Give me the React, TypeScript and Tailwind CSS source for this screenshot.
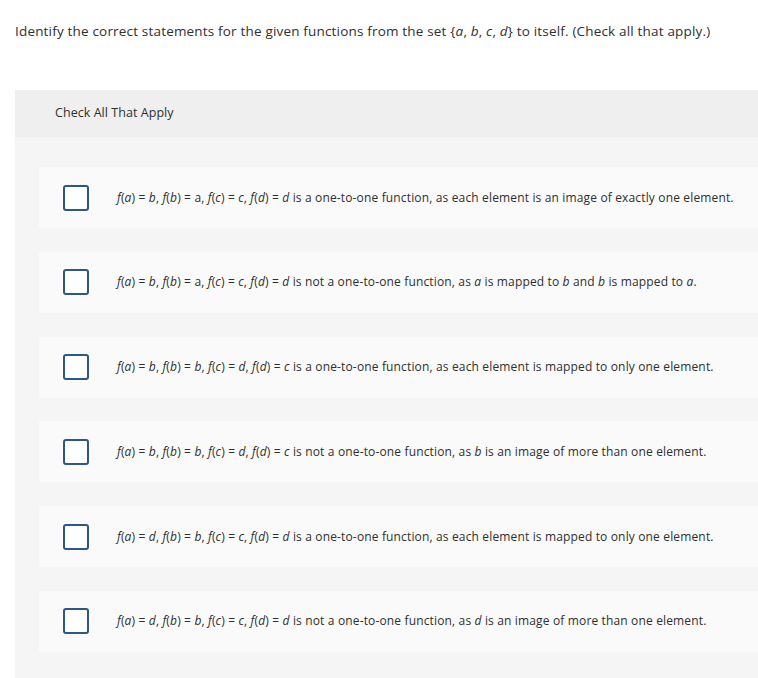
const options: { fx: [string, string, string, string]; aUpright?: boolean; tail: React.ReactNode }[] = [
  {
    fx: ['b', 'a', 'c', 'd'],
    aUpright: true,
    tail: <> is a one-to-one function, as each element is an image of exactly one element.</>,
  },
  {
    fx: ['b', 'a', 'c', 'd'],
    aUpright: true,
    tail: (
      <>
        {' '}is not a one-to-one function, as <i>a</i> is mapped to <i>b</i> and <i>b</i> is mapped to <i>a</i>.
      </>
    ),
  },
  {
    fx: ['b', 'b', 'd', 'c'],
    tail: <> is a one-to-one function, as each element is mapped to only one element.</>,
  },
  {
    fx: ['b', 'b', 'd', 'c'],
    tail: (
      <>
        {' '}is not a one-to-one function, as <i>b</i> is an image of more than one element.
      </>
    ),
  },
  {
    fx: ['d', 'b', 'c', 'd'],
    tail: <> is a one-to-one function, as each element is mapped to only one element.</>,
  },
  {
    fx: ['d', 'b', 'c', 'd'],
    tail: (
      <>
        {' '}is not a one-to-one function, as <i>d</i> is an image of more than one element.
      </>
    ),
  },
];

const args = ['a', 'b', 'c', 'd'];

function Statement({ fx, aUpright, tail }: (typeof options)[number]) {
  return (
    <span>
      {args.map((x, i) => (
        <span key={x}>
          <i>f</i>(<i>{x}</i>) = {aUpright && i === 1 ? fx[i] : <i>{fx[i]}</i>}
          {i < 3 ? ', ' : ''}
        </span>
      ))}
      {tail}
    </span>
  );
}

export default function App() {
  return (
    <div className="min-h-[678px] bg-white text-[#2f2f2f] font-['Open_Sans','Lato',sans-serif]">
      <p className="pl-[15px] pt-[22px] text-[13.5px] leading-[18px] tracking-[0.18px]">
        Identify the correct statements for the given functions from the set {'{'}
        <i>a</i>, <i>b</i>, <i>c</i>, <i>d</i>
        {'}'} to itself. (Check all that apply.)
      </p>

      <div className="ml-[15px] mt-[50px] bg-[#f5f5f5] pb-[26px]">
        <div className="flex h-[47px] items-center bg-[#efefef] pl-[40px] text-[12.5px] tracking-[0.05px]">
          Check All That Apply
        </div>
        <div className="flex flex-col gap-[23.8px] pl-[24px] pt-[30px]">
          {options.map((o, i) => (
            <div key={i} className="flex h-[61px] items-center bg-[#fafafa] pl-[24px] text-[12px] tracking-[0.15px]">
              <span className="mr-[28px] h-[26px] w-[26px] shrink-0 rounded-[3px] border-2 border-[#2c5786] bg-white" />
              <Statement {...o} />
            </div>
          ))}
        </div>
      </div>
    </div>
  );
}
